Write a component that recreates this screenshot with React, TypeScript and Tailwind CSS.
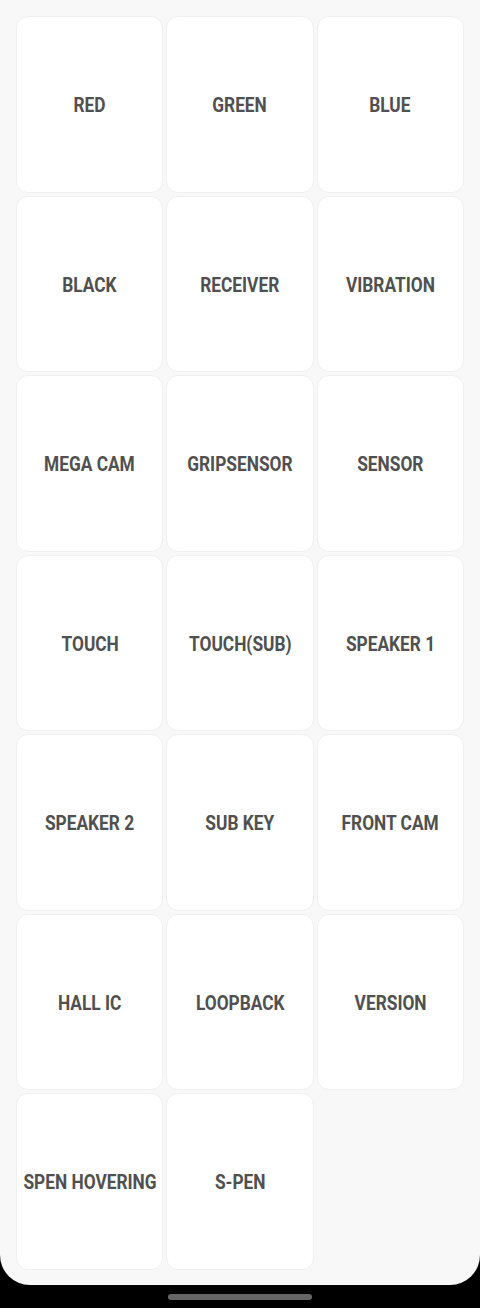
const ITEMS = [
  "RED",
  "GREEN",
  "BLUE",
  "BLACK",
  "RECEIVER",
  "VIBRATION",
  "MEGA CAM",
  "GRIPSENSOR",
  "SENSOR",
  "TOUCH",
  "TOUCH(SUB)",
  "SPEAKER 1",
  "SPEAKER 2",
  "SUB KEY",
  "FRONT CAM",
  "HALL IC",
  "LOOPBACK",
  "VERSION",
  "SPEN HOVERING",
  "S-PEN",
];

export default function App() {
  return (
    <div className="w-[480px] h-[1308px] bg-black flex flex-col overflow-hidden" style={{ fontFamily: "Roboto, 'Noto Sans', sans-serif" }}>
      <div className="h-[1285px] bg-[#f8f8f8] rounded-b-[30px] px-4 pt-4">
        <div className="grid grid-cols-3 gap-[3px] auto-rows-[176.5px]">
          {ITEMS.map((item) => (
            <div
              key={item}
              className="bg-white border border-[#f0f0f0] rounded-[12px] flex items-center justify-center pt-[2px]"
            >
              <span className="text-[20px] font-bold text-[#505050] scale-x-[0.865] whitespace-nowrap">{item}</span>
            </div>
          ))}
        </div>
      </div>
      <div className="flex-1 flex justify-center pt-[9px]">
        <div className="w-[144px] h-[6px] rounded-full bg-[#666666]" />
      </div>
    </div>
  );
}
